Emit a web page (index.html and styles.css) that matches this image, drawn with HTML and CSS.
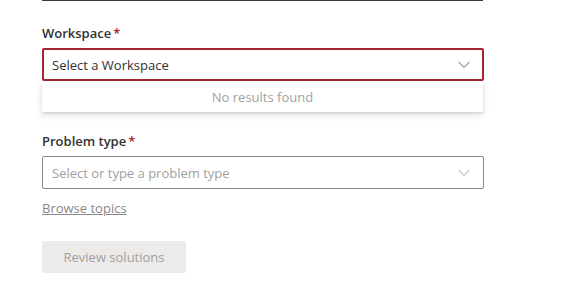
FILE: index.html
```html
<!DOCTYPE html>
<html>
<head>
<meta charset="utf-8">
<link rel="stylesheet" href="styles.css">
</head>
<body>
<div class="form">
  <div class="topline"></div>
  <div class="field ws">
    <label class="label">Workspace<span class="req">*</span></label>
    <div class="combo">
      <div class="select active">
        <span class="value">Select a Workspace</span>
        <svg class="chev" width="12" height="8" viewBox="0 0 12 8"><path d="M0.5 1 L6 6.5 L11.5 1" fill="none" stroke="#605e5c" stroke-width="1"/></svg>
      </div>
      <div class="menu">No results found</div>
    </div>
  </div>
  <div class="field pt">
    <label class="label">Problem type<span class="req">*</span></label>
    <div class="select">
      <span class="placeholder">Select or type a problem type</span>
      <svg class="chev" width="12" height="8" viewBox="0 0 12 8"><path d="M0.5 1 L6 6.5 L11.5 1" fill="none" stroke="#a19f9d" stroke-width="1"/></svg>
    </div>
    <a class="link">Browse topics</a>
  </div>
  <button class="btn">Review solutions</button>
</div>
</body>
</html>
```
FILE: styles.css
```css
* { box-sizing: border-box; }
html, body { margin: 0; padding: 0; background: #fff; }
body {
  font-family: "Open Sans", "Noto Sans", sans-serif;
  font-size: 13px;
  color: #323130;
}
.form {
  width: 442px;
  margin-left: 42px;
  display: flex;
  flex-direction: column;
}
.topline { height: 1px; background: #3b3a39; width: 441px; }
.field { display: flex; flex-direction: column; }
.ws { margin-top: 22px; }
.label {
  font-weight: 600;
  font-size: 13px;
  line-height: 20px;
  height: 20px;
  margin-bottom: 5px;
  color: #323130;
}
.req { color: #a4262c; margin-left: 2px; }
.combo { display: flex; flex-direction: column; }
.select {
  height: 33px;
  border: 1px solid #8a8886;
  border-radius: 2px;
  display: flex;
  align-items: center;
  justify-content: space-between;
  padding: 0 13px 0 9px;
}
.select.active { border: 2px solid #a4262c; height: 33px; padding-left: 8px; padding-right: 12px; }
.value { color: #323130; }
.placeholder { color: #a19f9d; }
.chev { display: block; }
.menu {
  height: 31px;
  width: 441px;
  display: flex;
  align-items: center;
  justify-content: center;
  color: #a19f9d;
  background: #fff;
  box-shadow: 0 3.2px 7.2px rgba(0,0,0,0.13), 0 0.6px 1.8px rgba(0,0,0,0.11);
}
.pt { margin-top: 19px; }
.link {
  margin-top: 10px;
  color: #8a8886;
  text-decoration: underline;
  line-height: 18px;
  align-self: flex-start;
}
.btn {
  margin-top: 24px;
  width: 144px;
  height: 32px;
  border: none;
  border-radius: 2px;
  background: #edebe9;
  color: #a19f9d;
  font-family: inherit;
  font-size: 13px;
  align-self: flex-start;
}
```
